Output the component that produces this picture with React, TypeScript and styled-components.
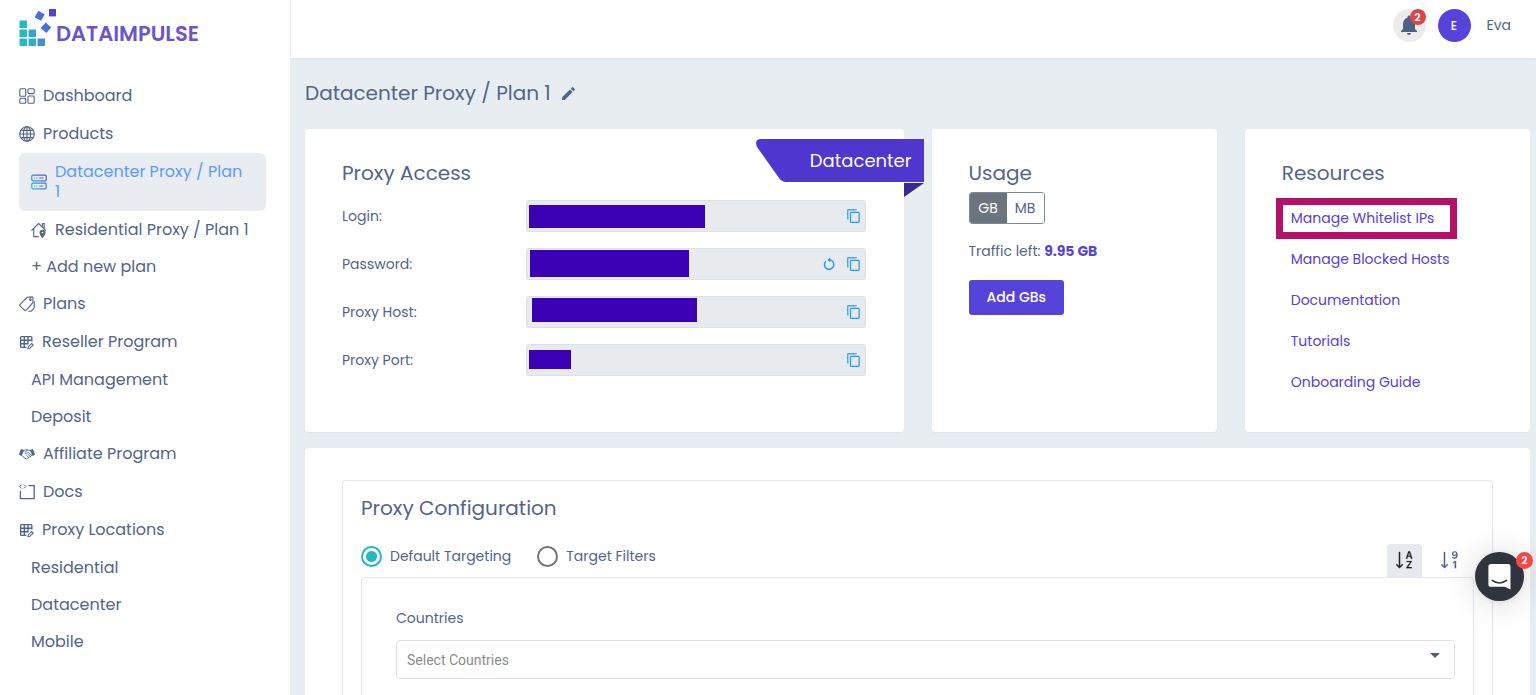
import React, { useState } from "react";
import styled, { createGlobalStyle, css } from "styled-components";
import { MdEdit, MdNotifications } from "react-icons/md";
import { BsSortAlphaDown, BsSortNumericDownAlt } from "react-icons/bs";

const ink = "#52658a";
const violet = "#5643d9";
const line = "#e3e6ee";

const Global = createGlobalStyle`
  *, *::before, *::after { box-sizing: border-box; }
  body { margin: 0; background: #e8edf1; color: ${ink}; font-family: Poppins, Inter, "Liberation Sans", sans-serif; font-size: 14px; }
  button, input, select { font: inherit; color: inherit; }
  a { color: inherit; text-decoration: none; }
  svg { display: block; flex: none; }
`;

/* ---------- shell ---------- */

const Shell = styled.div`
  display: flex;
  height: 100vh;
  overflow: hidden;
`;

const Sidebar = styled.aside`
  flex: none;
  width: 291px;
  padding: 8px 24px 0 19px;
  background: #fff;
  border-right: 1px solid #eceff3;
`;

const Page = styled.div`
  flex: 1;
  min-width: 0;
  display: flex;
  flex-direction: column;
`;

const Header = styled.header`
  flex: none;
  display: flex;
  align-items: center;
  justify-content: flex-end;
  height: 58px;
  padding: 0 25px 8px 0;
  background: #fff;
  box-shadow: 0 1px 3px rgba(60, 80, 110, 0.08);
`;

const Main = styled.main`
  flex: 1;
  display: flex;
  flex-direction: column;
  padding: 16px 6px 0 14px;
`;

/* ---------- sidebar ---------- */

const Logo = styled.a`
  display: flex;
  height: 38px;
  margin-bottom: 31px;
`;

const LogoText = styled.span`
  padding-top: 12px;
  color: #6a55cf;
  font-size: 21px;
  font-weight: 600;
  line-height: 28px;
`;

const NavList = styled.ul`
  margin: 0;
  padding: 0;
  list-style: none;
`;

const NavLink = styled.a<{ $sub?: boolean; $active?: boolean }>`
  display: flex;
  align-items: center;
  gap: 8px;
  min-height: 38px;
  font-size: 16px;
  line-height: 20px;
  ${(p) =>
    p.$sub &&
    css`
      min-height: 37px;
      padding-left: 12px;
    `}
  ${(p) =>
    p.$active &&
    css`
      padding: 9px 20px 9px 12px;
      border-radius: 6px;
      background: #e9edf1;
      color: #5c9bfc;
    `}
`;

/* ---------- header ---------- */

const BellButton = styled.button`
  position: relative;
  display: grid;
  place-items: center;
  width: 33px;
  height: 33px;
  margin-right: 12px;
  padding: 0;
  border: 0;
  border-radius: 50%;
  background: #ececec;
  color: #4d6183;
`;

const Count = styled.span<{ $color: string; $size: number }>`
  position: absolute;
  top: 0;
  right: 0;
  width: ${(p) => p.$size}px;
  height: ${(p) => p.$size}px;
  border-radius: 50%;
  background: ${(p) => p.$color};
  color: #fff;
  font-size: 11px;
  font-weight: 600;
  line-height: ${(p) => p.$size}px;
  text-align: center;
`;

const Avatar = styled.span`
  width: 33px;
  height: 33px;
  margin-right: 16px;
  border-radius: 50%;
  background: ${violet};
  color: #fff;
  font-size: 12px;
  font-weight: 500;
  line-height: 33px;
  text-align: center;
`;

/* ---------- cards ---------- */

const PageTitle = styled.h1`
  display: flex;
  align-items: center;
  gap: 9px;
  margin: 0 0 17px;
  font-size: 20px;
  font-weight: 400;
  line-height: 38px;
`;

const IconButton = styled.button`
  display: grid;
  place-items: center;
  padding: 0;
  border: 0;
  background: none;
`;

const CardGrid = styled.div`
  display: grid;
  grid-template-columns: repeat(4, minmax(0, 1fr));
  gap: 28px;
  margin-bottom: 16px;
`;

const Card = styled.section<{ $wide?: boolean }>`
  position: relative;
  grid-column: span ${(p) => (p.$wide ? 2 : 1)};
  padding: 28px 37px 29px;
  border-radius: 4px;
  background: #fff;
  box-shadow: 0 1px 1px rgba(60, 80, 110, 0.05);
`;

const CardTitle = styled.h2`
  margin: 0;
  font-size: 20px;
  font-weight: 400;
  line-height: 32px;
`;

const Ribbon = styled.div`
  position: absolute;
  top: 10px;
  right: -20px;
  width: 168px;
  color: #fff;
`;

const RibbonText = styled.span`
  position: absolute;
  top: 0;
  right: 12px;
  font-size: 18px;
  line-height: 43px;
`;

const FieldRows = styled.div`
  display: grid;
  gap: 16px;
  margin-top: 11px;
`;

const FieldRow = styled.div`
  display: grid;
  grid-template-columns: 35% 65%;
  align-items: center;
`;

const FieldBox = styled.div`
  position: relative;
`;

const FieldInput = styled.input`
  display: block;
  width: 100%;
  height: 32px;
  padding: 0 56px 0 8px;
  border: 1px solid #dcdfe3;
  border-radius: 3px;
  background: #e8ebee;
`;

const FieldMask = styled.span`
  position: absolute;
  background: #3c00b4;
`;

const FieldActions = styled.div`
  position: absolute;
  inset: 0 6px 0 auto;
  display: flex;
  align-items: center;
  gap: 11px;
  color: #1e9bfb;
`;

const UnitToggle = styled.div`
  display: flex;
  width: max-content;
  margin: 3px 0 17px;
  border: 1px solid #7d8aa6;
  border-radius: 3px;
  overflow: hidden;
`;

const UnitButton = styled.button<{ $on: boolean }>`
  width: 37px;
  height: 30px;
  padding: 0;
  border: 0;
  background: ${(p) => (p.$on ? "#6c757d" : "#fff")};
  color: ${(p) => (p.$on ? "#fff" : ink)};
`;

const Traffic = styled.p`
  margin: 0 0 19px;
  line-height: 20px;
  white-space: nowrap;

  b {
    color: ${violet};
    font-weight: 700;
  }
`;

const PrimaryButton = styled.button`
  height: 35px;
  padding: 0 18px;
  border: 0;
  border-radius: 3px;
  background: ${violet};
  color: #fff;
  font-weight: 500;
`;

const LinkList = styled.ul`
  margin: 9px 0 0;
  padding: 0 0 0 9px;
  list-style: none;
  line-height: 41px;
  color: #5840d8;
`;

const ResourceLink = styled.a<{ $marked?: boolean }>`
  position: relative;
  display: inline-block;
  white-space: nowrap;
  ${(p) =>
    p.$marked &&
    css`
      &::after {
        content: "";
        position: absolute;
        inset: 0 -23px 0 -15px;
        border: 7px solid #b31266;
      }
    `}
`;

/* ---------- configuration ---------- */

const ConfigCard = styled.section`
  flex: 1;
  display: flex;
  padding: 32px 37px 0;
  border-radius: 4px 4px 0 0;
  background: #fff;
`;

const ConfigPanel = styled.div`
  flex: 1;
  display: flex;
  flex-direction: column;
  padding: 11px 18px 0;
  border: 1px solid ${line};
  border-bottom: 0;
  border-radius: 4px 4px 0 0;
`;

const ConfigBar = styled.div`
  display: flex;
  align-items: flex-end;
  justify-content: space-between;
  height: 53px;
`;

const Choices = styled.div`
  display: flex;
  gap: 26px;
  margin-bottom: 10px;
`;

const Choice = styled.label`
  display: flex;
  align-items: center;
  gap: 8px;
  line-height: 21px;
`;

const Radio = styled.input`
  appearance: none;
  width: 21px;
  height: 21px;
  margin: 0;
  border: 2px solid #757575;
  border-radius: 50%;

  &:checked {
    border-color: #22b8bf;
    background: radial-gradient(circle, #22b8bf 5px, transparent 6px);
  }
`;

const SortButtons = styled.div`
  display: flex;
  gap: 10px;
  margin-right: 7px;
`;

const SortButton = styled.button<{ $on: boolean }>`
  display: grid;
  place-items: center;
  width: 35px;
  height: 33px;
  padding: 0 0 2px;
  border: 0;
  border-radius: 3px 3px 0 0;
  background: ${(p) => (p.$on ? "#e6eaee" : "transparent")};
  color: ${(p) => (p.$on ? "#212529" : ink)};

  path {
    stroke: currentColor;
    stroke-width: 0.1;
  }
`;

const Filters = styled.div`
  flex: 1;
  padding: 30px 18px 0 34px;
  border: 1px solid ${line};
  border-bottom: 0;
  border-radius: 4px 4px 0 0;
`;

const SelectLabel = styled.label`
  display: block;
  margin-bottom: 12px;
  line-height: 20px;
`;

const SelectWrap = styled.div`
  position: relative;

  svg {
    position: absolute;
    top: 13px;
    right: 15px;
    pointer-events: none;
  }
`;

const Select = styled.select`
  appearance: none;
  display: block;
  width: 100%;
  height: 39px;
  padding: 0 36px 0 10px;
  border: 1px solid #dfe1e5;
  border-radius: 4px;
  background: #fff;
  color: #8c8c8c;
  font-family: Roboto, sans-serif;
`;

const ChatButton = styled.button`
  position: fixed;
  right: 12px;
  bottom: 94px;
  display: grid;
  place-items: center;
  width: 49px;
  height: 49px;
  padding: 0;
  border: 0;
  border-radius: 50%;
  background: #2f343d;
  box-shadow: 0 1px 6px rgba(0, 0, 0, 0.08), 0 2px 32px rgba(0, 0, 0, 0.16);
`;

const ChatCount = styled(Count)`
  top: 0;
  right: -9px;
`;

/* ---------- drawings ---------- */

const Line16 = ({ children }: { children: React.ReactNode }) => (
  <svg width="16" height="16" viewBox="0 0 16 16" fill="none" stroke="currentColor" strokeWidth="1.1" strokeLinecap="round" strokeLinejoin="round" aria-hidden>
    {children}
  </svg>
);

const LogoMark = () => (
  <svg width="37" height="38" viewBox="0 0 37 38" aria-hidden>
    <g fill="#25b9c2">
      <rect x="0.5" y="12.5" width="7.5" height="7.5" />
      <rect x="0.5" y="21.5" width="7.5" height="7.5" />
      <rect x="0.5" y="30.5" width="7.5" height="7.5" />
    </g>
    <rect x="9.5" y="21.5" width="7.5" height="7.5" fill="#38a5cb" />
    <rect x="9.5" y="30.5" width="7.5" height="7.5" fill="#2fafc8" />
    <rect x="18.5" y="30.5" width="7.5" height="7.5" fill="#4391cf" />
    <rect x="-3.7" y="-3.7" width="7.4" height="7.4" fill="#4a70d4" transform="translate(20.7 7.8) rotate(30)" />
    <rect x="-3.7" y="-3.7" width="7.4" height="7.4" fill="#4a6fd4" transform="translate(27 19.8) rotate(42)" />
    <rect x="30" y="1" width="7" height="7.4" fill="#513fd8" />
  </svg>
);

const DashboardIcon = () => (
  <Line16>
    <rect x="0.8" y="0.8" width="6" height="7.4" rx="1" />
    <rect x="9" y="0.8" width="6.2" height="4.8" rx="1" />
    <rect x="0.8" y="10.2" width="6" height="5" rx="1" />
    <rect x="9" y="8" width="6.2" height="7.2" rx="1" />
  </Line16>
);

const GlobeIcon = () => (
  <Line16>
    <circle cx="8" cy="8" r="7.3" />
    <ellipse cx="8" cy="8" rx="3.6" ry="7.3" />
    <path d="M8 0.7V15.3M0.7 8H15.3M1.8 4.4H14.2M1.8 11.6H14.2" />
  </Line16>
);

const ServerIcon = () => (
  <svg width="16" height="16" viewBox="0 0 16 16" fill="none" stroke="url(#server-tint)" strokeWidth="1.2" strokeLinecap="round" aria-hidden>
    <defs>
      <linearGradient id="server-tint" gradientUnits="userSpaceOnUse" x1="0" y1="16" x2="16" y2="0">
        <stop offset="0" stopColor="#27c3c7" />
        <stop offset="1" stopColor="#5d48dc" />
      </linearGradient>
    </defs>
    <rect x="0.8" y="1.2" width="14.4" height="5.6" rx="1" />
    <rect x="0.8" y="9.2" width="14.4" height="5.6" rx="1" />
    <path d="M3.5 4H3.6M5.8 4H5.9M8.5 4H12M3.5 12H3.6M5.8 12H5.9M8.5 12H12" />
  </svg>
);

const HouseIcon = () => (
  <Line16>
    <path d="M0.8 8.4L7.6 1.5L14.6 8.4M2.8 7V14.6H7.4M11.4 4.9V1.6H13.2V6.6" />
    <path d="M11.4 15.4C9.9 13.3 9 12 9 10.7A2.5 2.5 0 0 1 14 10.7C14 12 12.9 13.3 11.4 15.4Z" fill="currentColor" />
    <circle cx="11.5" cy="10.6" r="0.8" fill="#fff" stroke="none" />
  </Line16>
);

const TagIcon = () => (
  <Line16>
    <path d="M8.2 1.2L13 0.9Q14 0.9 14 2L13.9 6.6L7 14.4Q6.4 15 5.7 14.4L1 9.9Q0.4 9.3 1 8.6Z" />
    <path d="M15.2 5.6V11.2Q15.2 12 14.6 12.7L12.2 15.2H9.8" />
    <circle cx="11.4" cy="3.7" r="0.8" />
  </Line16>
);

const GridEditIcon = () => (
  <svg width="15" height="15" viewBox="0 0 15 15" fill="none" stroke="currentColor" strokeWidth="1.4" aria-hidden>
    <path d="M7.4 12.4H2.4Q1.6 12.4 1.6 11.6V2.4Q1.6 1.6 2.4 1.6H12Q12.8 1.6 12.8 2.4V6.6M1.6 5.2H12.8M1.6 8.8H9.4M5.3 1.6V12.4M9 1.6V9.2" />
    <path d="M9 13.6L9.3 11.7L12.7 8.4L14.2 9.9L10.9 13.3Z" strokeWidth="1.1" />
  </svg>
);

const HandshakeIcon = () => (
  <Line16>
    <path d="M2.4 3.6L0.6 8.2L2.2 9.2L4.4 4.6ZM13.6 3.6L15.4 8.2L13.8 9.2L11.6 4.6Z" fill="currentColor" />
    <path d="M4.4 4.6L7 3.8L11.6 4.6M2.4 9.2L6.2 12.4Q7.4 13.2 8.6 12.4L13.6 8.8M8.4 4.2L5.8 6.6Q6.4 8 8.2 7L9.4 6.6L12.4 9.4M7.6 9.4L9.6 11.4M9.2 8.4L11.2 10.4" strokeWidth="0.9" />
  </Line16>
);

const DocsIcon = () => (
  <Line16>
    <path d="M10 1.6H15.2V14.6H1.4V7.4" strokeWidth="1.3" strokeLinejoin="miter" />
    <path d="M2.4 0.8L0.7 2.5L2.4 4.2M5.2 0.8L6.9 2.5L5.2 4.2" strokeWidth="1" />
  </Line16>
);

const CopyIcon = () => (
  <svg width="13" height="14" viewBox="0 0 13 14" fill="none" stroke="currentColor" strokeWidth="1.2" aria-hidden>
    <path d="M0.8 10.6V0.8H9.6" />
    <rect x="3.5" y="3.4" width="8.6" height="9.9" rx="0.5" />
  </svg>
);

const ResetIcon = () => (
  <svg width="13" height="14" viewBox="0 0 13 14" fill="none" stroke="currentColor" strokeWidth="1.4" aria-hidden>
    <path d="M2.9 4.2A4.7 4.7 0 1 0 6.5 2.9Q7.8 2.9 9.2 3.6" />
    <path d="M7.2 0.6V5.2L4.4 2.9Z" fill="currentColor" stroke="none" />
  </svg>
);

const CaretIcon = () => (
  <svg width="10" height="5" viewBox="0 0 10 5" aria-hidden>
    <path d="M0 0H10L5 5Z" fill="#4d6183" />
  </svg>
);

const ChatIcon = () => (
  <svg width="23" height="26" viewBox="0 0 23 26" aria-hidden>
    <path d="M3 0H20Q22.5 0 22.5 2.6V25.5L16.6 22.8H3Q0.4 22.8 0.4 20.2V2.6Q0.4 0 3 0Z" fill="#fff" />
    <path d="M4.2 16.3Q11.4 21.6 18.6 16.3" fill="none" stroke="#2f343d" strokeWidth="1.5" strokeLinecap="round" />
  </svg>
);

/* ---------- data ---------- */

type NavItem = { label: string; icon?: React.ReactNode; sub?: boolean; active?: boolean };

const nav: NavItem[] = [
  { label: "Dashboard", icon: <DashboardIcon /> },
  { label: "Products", icon: <GlobeIcon /> },
  { label: "Datacenter Proxy / Plan 1", icon: <ServerIcon />, sub: true, active: true },
  { label: "Residential Proxy / Plan 1", icon: <HouseIcon />, sub: true },
  { label: "+ Add new plan", sub: true },
  { label: "Plans", icon: <TagIcon /> },
  { label: "Reseller Program", icon: <GridEditIcon /> },
  { label: "API Management", sub: true },
  { label: "Deposit", sub: true },
  { label: "Affiliate Program", icon: <HandshakeIcon /> },
  { label: "Docs", icon: <DocsIcon /> },
  { label: "Proxy Locations", icon: <GridEditIcon /> },
  { label: "Residential", sub: true },
  { label: "Datacenter", sub: true },
  { label: "Mobile", sub: true },
];

const fields = [
  { id: "login", label: "Login:", mask: { left: 3, top: 5, width: 176, height: 23 } },
  { id: "password", label: "Password:", mask: { left: 4, top: 2, width: 159, height: 27 }, reset: true },
  { id: "host", label: "Proxy Host:", mask: { left: 6, top: 2, width: 165, height: 24 } },
  { id: "port", label: "Proxy Port:", mask: { left: 3, top: 6, width: 42, height: 19 } },
];

const resources = ["Manage Whitelist IPs", "Manage Blocked Hosts", "Documentation", "Tutorials", "Onboarding Guide"];

export default function App() {
  const [unit, setUnit] = useState("GB");
  const [sort, setSort] = useState("name");

  return (
    <>
      <Global />
      <Shell>
        <Sidebar>
          <Logo href="#">
            <LogoMark />
            <LogoText>DATAIMPULSE</LogoText>
          </Logo>
          <nav>
            <NavList>
              {nav.map((item) => (
                <li key={item.label}>
                  <NavLink href="#" $sub={item.sub} $active={item.active}>
                    {item.icon}
                    <span>{item.label}</span>
                  </NavLink>
                </li>
              ))}
            </NavList>
          </nav>
        </Sidebar>

        <Page>
          <Header>
            <BellButton aria-label="Notifications">
              <MdNotifications size={24} />
              <Count $color="#dc4548" $size={16}>2</Count>
            </BellButton>
            <Avatar>E</Avatar>
            <span>Eva</span>
          </Header>

          <Main>
            <PageTitle>
              Datacenter Proxy / Plan 1
              <IconButton aria-label="Rename plan">
                <MdEdit size={17} />
              </IconButton>
            </PageTitle>

            <CardGrid>
              <Card $wide>
                <CardTitle>Proxy Access</CardTitle>
                <Ribbon>
                  <svg width="168" height="58" viewBox="0 0 168 58" aria-hidden>
                    <path d="M5 0H168V43H30Q26 43 23 39L1 8Q-2 0 5 0Z" fill="#4e36cf" />
                    <path d="M148 44H168L148 58Z" fill="#3a2891" />
                  </svg>
                  <RibbonText>Datacenter</RibbonText>
                </Ribbon>
                <FieldRows>
                  {fields.map((f) => (
                    <FieldRow key={f.id}>
                      <label htmlFor={f.id}>{f.label}</label>
                      <FieldBox>
                        <FieldInput id={f.id} readOnly />
                        <FieldMask style={f.mask} />
                        <FieldActions>
                          {f.reset && (
                            <IconButton aria-label="Reset password">
                              <ResetIcon />
                            </IconButton>
                          )}
                          <IconButton aria-label={`Copy ${f.id}`}>
                            <CopyIcon />
                          </IconButton>
                        </FieldActions>
                      </FieldBox>
                    </FieldRow>
                  ))}
                </FieldRows>
              </Card>

              <Card>
                <CardTitle>Usage</CardTitle>
                <UnitToggle>
                  {["GB", "MB"].map((u) => (
                    <UnitButton key={u} $on={unit === u} onClick={() => setUnit(u)}>
                      {u}
                    </UnitButton>
                  ))}
                </UnitToggle>
                <Traffic>
                  Traffic left: <b>9.95 GB</b>
                </Traffic>
                <PrimaryButton>Add GBs</PrimaryButton>
              </Card>

              <Card>
                <CardTitle>Resources</CardTitle>
                <LinkList>
                  {resources.map((r, i) => (
                    <li key={r}>
                      <ResourceLink href="#" $marked={i === 0}>
                        {r}
                      </ResourceLink>
                    </li>
                  ))}
                </LinkList>
              </Card>
            </CardGrid>

            <ConfigCard>
              <ConfigPanel>
                <CardTitle>Proxy Configuration</CardTitle>
                <ConfigBar>
                  <Choices>
                    <Choice>
                      <Radio type="radio" name="targeting" defaultChecked />
                      Default Targeting
                    </Choice>
                    <Choice>
                      <Radio type="radio" name="targeting" />
                      Target Filters
                    </Choice>
                  </Choices>
                  <SortButtons>
                    <SortButton $on={sort === "name"} onClick={() => setSort("name")} aria-label="Sort by name">
                      <BsSortAlphaDown size={22} />
                    </SortButton>
                    <SortButton $on={sort === "count"} onClick={() => setSort("count")} aria-label="Sort by count">
                      <BsSortNumericDownAlt size={22} />
                    </SortButton>
                  </SortButtons>
                </ConfigBar>
                <Filters>
                  <SelectLabel htmlFor="countries">Countries</SelectLabel>
                  <SelectWrap>
                    <Select id="countries" defaultValue="">
                      <option value="">Select Countries</option>
                    </Select>
                    <CaretIcon />
                  </SelectWrap>
                </Filters>
              </ConfigPanel>
            </ConfigCard>
          </Main>
        </Page>
      </Shell>

      <ChatButton aria-label="Open chat">
        <ChatIcon />
        <ChatCount $color="#fd4645" $size={17}>2</ChatCount>
      </ChatButton>
    </>
  );
}
